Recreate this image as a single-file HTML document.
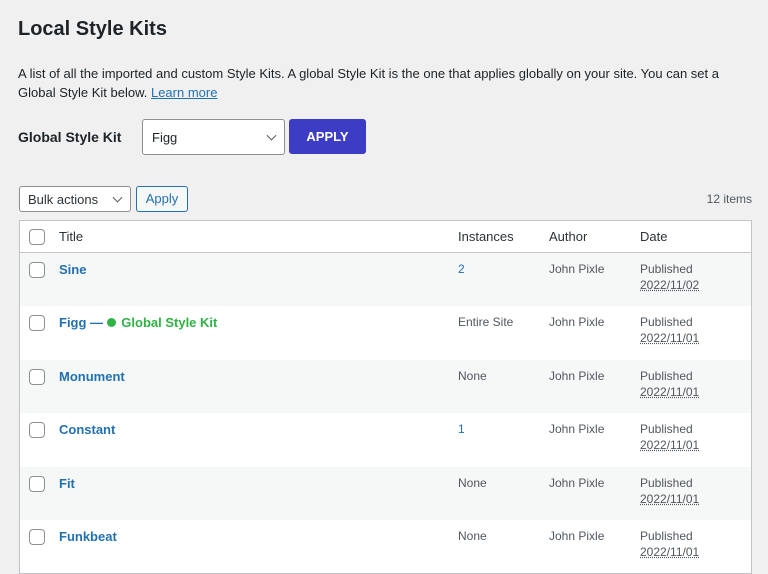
<!DOCTYPE html><html><head><style>
body{margin:0;background:#f0f0f1;font-family:"Liberation Sans",sans-serif;color:#1d2327;width:768px;height:538px;overflow:hidden;position:relative}
.a{position:absolute}
h1{position:absolute;left:18px;top:18px;margin:0;font-size:20px;font-weight:600}
p{position:absolute;left:18px;top:64px;margin:0;font-size:13px;line-height:19px;width:730px}
a{color:#2271b1}
.sel{background:#fff;border:1px solid #8c8f94;border-radius:3px;box-sizing:border-box;font-size:13px}
.chev{position:absolute;right:9px;top:50%;width:6px;height:6px;border-right:1.5px solid #50575e;border-bottom:1.5px solid #50575e;transform:translateY(-70%) rotate(45deg)}
table{position:absolute;left:19px;top:220px;width:733px;border-collapse:collapse;background:#fff;border:1px solid #c3c4c7;font-size:12px;color:#50575e}
td,th{vertical-align:top;text-align:left;padding:0}
th{font-weight:normal;font-size:13px;color:#2c3338;height:31px;vertical-align:middle;border-bottom:1px solid #c3c4c7}
tr.s{background:#f6f7f7}
.cb{width:14px;height:14px;border:1px solid #8c8f94;border-radius:4px;background:#fff;margin:9px 0 0 9px}
th .cb{margin:0 0 0 9px}
tr.r{height:53.5px}
tr.r td{padding-top:9px}
tr.r td:first-child{padding-top:0}
.t{color:#2271b1;font-weight:600;font-size:13px}
.d{text-decoration:underline dotted;line-height:18px}
</style></head><body>
<h1>Local Style Kits</h1>
<p>A list of all the imported and custom Style Kits. A global Style Kit is the one that applies globally on your site. You can set a Global Style Kit below. <a href="#">Learn more</a></p>
<div class="a" style="left:18px;top:129px;font-size:14px;font-weight:bold">Global Style Kit</div>
<div class="a sel" style="left:142px;top:119px;width:143px;height:36px;padding:10px 9px">Figg<span class="chev"></span></div>
<div class="a" style="left:289px;top:119px;width:77px;height:35px;background:#3c3cc4;border-radius:3px;color:#fff;font-weight:bold;font-size:13px;text-align:center;line-height:35px">APPLY</div>
<div class="a sel" style="left:19px;top:186px;width:112px;height:26px;padding:5px 8px;color:#2c3338">Bulk actions<span class="chev"></span></div>
<div class="a" style="left:136px;top:186px;width:52px;height:26px;box-sizing:border-box;border:1px solid #2271b1;border-radius:3px;background:#f6f7f7;color:#2271b1;font-size:13px;text-align:center;line-height:24px">Apply</div>
<div class="a" style="right:16px;top:192px;font-size:12px;color:#50575e">12 items</div>
<table>
<tr><th style="width:39px"><div class="cb"></div></th><th style="width:399px">Title</th><th style="width:91px">Instances</th><th style="width:91px">Author</th><th>Date</th></tr>
<tr class="r s"><td><div class="cb"></div></td><td class="t">Sine</td><td style="color:#2271b1">2</td><td>John Pixle</td><td>Published<br><span class="d">2022/11/02</span></td></tr>
<tr class="r"><td><div class="cb"></div></td><td class="t">Figg — <span style="color:#2fb344"><span style="display:inline-block;width:9px;height:9px;border-radius:50%;background:#2fb344;margin-right:2px"></span> Global Style Kit</span></td><td>Entire Site</td><td>John Pixle</td><td>Published<br><span class="d">2022/11/01</span></td></tr>
<tr class="r s"><td><div class="cb"></div></td><td class="t">Monument</td><td>None</td><td>John Pixle</td><td>Published<br><span class="d">2022/11/01</span></td></tr>
<tr class="r"><td><div class="cb"></div></td><td class="t">Constant</td><td style="color:#2271b1">1</td><td>John Pixle</td><td>Published<br><span class="d">2022/11/01</span></td></tr>
<tr class="r s"><td><div class="cb"></div></td><td class="t">Fit</td><td>None</td><td>John Pixle</td><td>Published<br><span class="d">2022/11/01</span></td></tr>
<tr class="r"><td><div class="cb"></div></td><td class="t">Funkbeat</td><td>None</td><td>John Pixle</td><td>Published<br><span class="d">2022/11/01</span></td></tr>
</table>
</body></html>
